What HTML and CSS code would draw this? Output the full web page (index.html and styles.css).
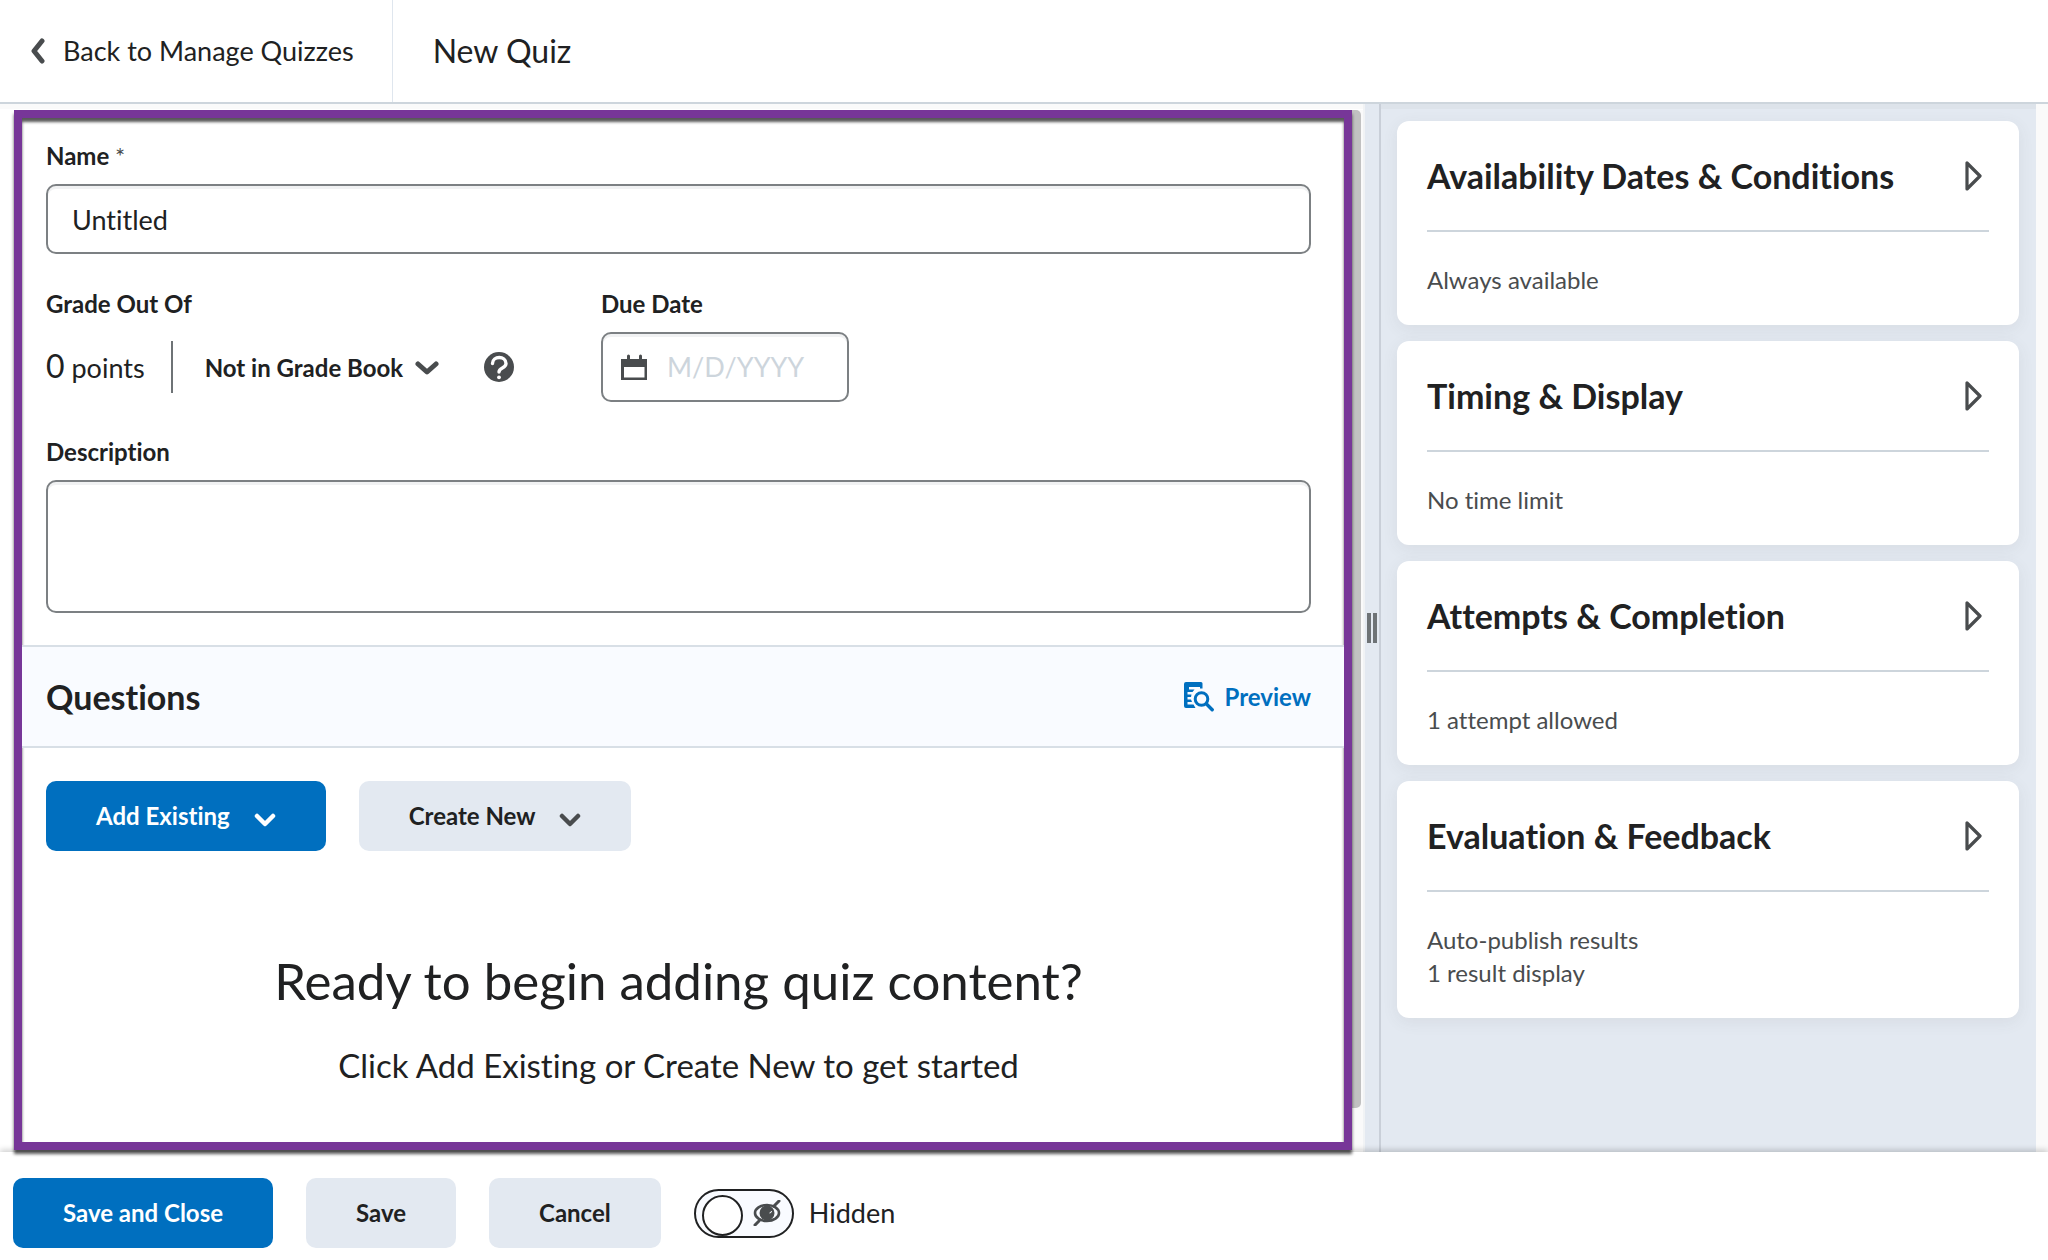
FILE: index.html
```
<!DOCTYPE html>
<html lang="en">
<head>
  <meta charset="utf-8">
  <title>New Quiz</title>
  <link rel="stylesheet" href="styles.css">
</head>
<body>
  <header class="top-bar">
    <a href="#" class="back-link">
      <svg width="15" height="26" viewBox="0 0 15 26"><path d="M12 3L4 13l8 10" fill="none" stroke="#494c4e" stroke-width="5" stroke-linecap="round" stroke-linejoin="round"/></svg>
      Back to Manage Quizzes
    </a>
    <h1 class="page-title">New Quiz</h1>
  </header>

  <main class="content">
    <div class="primary">
      <form class="editor" id="quizForm">
        <div class="fields">
          <div class="field">
            <label for="quizName">Name <span class="required">*</span></label>
            <input type="text" id="quizName" class="text-box" value="Untitled">
          </div>

          <div class="field-row">
            <div class="field grade">
              <span class="label">Grade Out Of</span>
              <div class="grade-row">
                <span class="points"><span class="points-value">0</span> points</span>
                <button type="button" class="grade-book">
                  Not in Grade Book
                  <svg width="24" height="14" viewBox="0 0 24 14"><path d="M3 3l9 8 9-8" fill="none" stroke="#494c4e" stroke-width="5" stroke-linecap="round" stroke-linejoin="round"/></svg>
                </button>
                <button type="button" class="help" aria-label="Help">
                  <svg width="30" height="30" viewBox="0 0 30 30">
                    <circle cx="15" cy="15" r="15" fill="#494c4e"/>
                    <path d="M8.500 11.500C8.500 3.500 22 3.500 22 11.500c0 5-7 4-7 8.500" fill="none" stroke="#fff" stroke-width="3.400" stroke-linecap="round"/>
                    <circle cx="15" cy="25.300" r="1.900" fill="#fff"/>
                  </svg>
                </button>
              </div>
            </div>
            <div class="field due">
              <label for="dueDate">Due Date</label>
              <div class="date-box">
                <svg width="26" height="26" viewBox="0 0 26 26"><path d="M0 5h6V2a1.500 1.500 0 013 0v3h9V2a1.500 1.500 0 013 0v3h5v21H0zM3 13v10.500h20.500V13z" fill="#494c4e" fill-rule="evenodd"/></svg>
                <input type="text" id="dueDate" placeholder="M/D/YYYY">
              </div>
            </div>
          </div>

          <div class="field">
            <label for="description">Description</label>
            <textarea id="description" class="text-box"></textarea>
          </div>
        </div>

        <div class="questions-bar">
          <h2>Questions</h2>
          <a href="#" class="preview">
            <svg width="30" height="30" viewBox="0 0 30 30" fill="none">
              <path d="M2 0h15a1.500 1.500 0 011.500 1.500V6.500H16V5H5v2.500h5.500L8.500 10H3.500v2.500H7.500L7 15H3.500v2.500H7L8 20H3.500v2.500H9.500l2 3.500H2a2 2 0 01-2-2V2a2 2 0 012-2z" fill="#006fbf"/>
              <circle cx="17.500" cy="17" r="6.300" stroke="#006fbf" stroke-width="3"/>
              <path d="M22.500 22l5.700 5.700" stroke="#006fbf" stroke-width="3.400" stroke-linecap="round"/>
            </svg>
            Preview
          </a>
        </div>

        <div class="questions">
          <div class="actions">
            <button type="button" class="btn btn-primary btn-menu">
              Add Existing
              <svg width="22" height="14" viewBox="0 0 22 14"><path d="M3 3l8 8 8-8" fill="none" stroke="#fff" stroke-width="4.500" stroke-linecap="round" stroke-linejoin="round"/></svg>
            </button>
            <button type="button" class="btn btn-menu">
              Create New
              <svg width="22" height="14" viewBox="0 0 22 14"><path d="M3 3l8 8 8-8" fill="none" stroke="#494c4e" stroke-width="4.500" stroke-linecap="round" stroke-linejoin="round"/></svg>
            </button>
          </div>
          <div class="empty">
            <h3>Ready to begin adding quiz content?</h3>
            <p>Click Add Existing or Create New to get started</p>
          </div>
        </div>
      </form>
      <div class="scroll-track"><div class="scroll-thumb"></div></div>
    </div>

    <div class="divider"><span></span><span></span></div>

    <aside class="settings">
      <section class="card">
        <h2><button type="button">Availability Dates &amp; Conditions
          <svg width="17" height="30" viewBox="0 0 17 30"><path d="M2 2v26l13-13z" fill="none" stroke="#494c4e" stroke-width="3.200" stroke-linejoin="round"/></svg></button></h2>
        <p>Always available</p>
      </section>
      <section class="card">
        <h2><button type="button">Timing &amp; Display
          <svg width="17" height="30" viewBox="0 0 17 30"><path d="M2 2v26l13-13z" fill="none" stroke="#494c4e" stroke-width="3.200" stroke-linejoin="round"/></svg></button></h2>
        <p>No time limit</p>
      </section>
      <section class="card">
        <h2><button type="button">Attempts &amp; Completion
          <svg width="17" height="30" viewBox="0 0 17 30"><path d="M2 2v26l13-13z" fill="none" stroke="#494c4e" stroke-width="3.200" stroke-linejoin="round"/></svg></button></h2>
        <p>1 attempt allowed</p>
      </section>
      <section class="card">
        <h2><button type="button">Evaluation &amp; Feedback
          <svg width="17" height="30" viewBox="0 0 17 30"><path d="M2 2v26l13-13z" fill="none" stroke="#494c4e" stroke-width="3.200" stroke-linejoin="round"/></svg></button></h2>
        <p>Auto-publish results</p>
        <p>1 result display</p>
      </section>
    </aside>
  </main>

  <footer class="bottom-bar">
    <button type="submit" form="quizForm" class="btn btn-primary">Save and Close</button>
    <button type="button" class="btn">Save</button>
    <button type="button" class="btn">Cancel</button>
    <label class="visibility">
      <span class="switch">
        <input type="checkbox" role="switch">
        <svg width="28" height="26" viewBox="0 0 28 26">
          <ellipse cx="14" cy="13" rx="12" ry="8" fill="none" stroke="#494c4e" stroke-width="2.600"/>
          <circle cx="14" cy="13" r="7.500" fill="#494c4e"/>
          <path d="M2 25l4-4M21 6l5-5" stroke="#494c4e" stroke-width="3" stroke-linecap="round"/>
          <path d="M16.500 13q2 0 2-2" stroke="#f9fbff" fill="none"/>
        </svg>
      </span>
      Hidden
    </label>
  </footer>
</body>
</html>
```
FILE: styles.css
```
* {
  box-sizing: border-box;
}

body {
  margin: 0;
  min-height: 100vh;
  display: flex;
  flex-direction: column;
  font-family: Lato, "Liberation Sans", sans-serif;
  font-size: 27px;
  line-height: 34px;
  font-variant-ligatures: none;
  color: #202122;
  background: #fff;
}

h1, h2, h3, p {
  margin: 0;
}

svg {
  flex: none;
}

button, input, textarea {
  font: inherit;
  font-variant-ligatures: none;
  color: inherit;
}

button {
  border: 0;
  padding: 0;
  background: none;
  cursor: pointer;
}

/* Header */
.top-bar {
  display: flex;
  height: 104px;
  border-bottom: 2px solid #cdd5dc;
}

.back-link {
  display: flex;
  align-items: center;
  gap: 18px;
  padding: 0 38px 0 30px;
  border-right: 1px solid #dfe6ee;
  color: #202122;
  text-decoration: none;
}

.page-title {
  align-self: center;
  padding-left: 40px;
  font-size: 32px;
  line-height: 40px;
  font-weight: 400;
}

/* Main area */
.content {
  flex: 1;
  display: grid;
  grid-template-columns: 47fr 18px 23fr;
}

.primary {
  display: flex;
  padding: 6px 0 2px 14px;
  background: linear-gradient(#fafafa 5px, #fff 5px);
}

.editor {
  flex: 1;
  position: relative;
  z-index: 1;
  border: 8px solid #773698;
  background: #fff;
  box-shadow: 0 4px 3px rgba(0, 0, 0, 0.65), inset 0 4px 3px rgba(0, 0, 0, 0.65);
}

.scroll-track {
  width: 11px;
  background: #fafafa;
}

.scroll-thumb {
  width: 9px;
  height: 96%;
  background: #c1c1c1;
  border-radius: 0 5px 5px 0;
}

.fields {
  display: flex;
  flex-direction: column;
  gap: 36px;
  padding: 24px 33px 32px 24px;
}

.field {
  display: flex;
  flex-direction: column;
  gap: 14px;
}

.field > label, .label {
  font-size: 24px;
  line-height: 28px;
  font-weight: 700;
}

.required {
  font-weight: 400;
  color: #494c4e;
}

.text-box, .date-box {
  width: 100%;
  height: 70px;
  padding: 0 24px;
  border: 2px solid #7c8083;
  border-radius: 10px;
  background: #fff;
  box-shadow: inset 0 3px 0 #f1f2f3;
}

textarea.text-box {
  height: 133px;
  padding: 16px 24px;
  resize: none;
}

.field-row {
  display: flex;
}

.grade {
  width: 555px;
}

.grade-row {
  display: flex;
  align-items: center;
  height: 70px;
}

.points {
  padding-right: 26px;
  line-height: 50px;
  border-right: 2px solid #6e7376;
}

.points-value {
  font-size: 32px;
}

.grade-book {
  display: flex;
  align-items: center;
  gap: 12px;
  margin-left: 32px;
  padding-top: 2px;
  font-size: 24px;
  font-weight: 700;
}

.help {
  display: flex;
  margin-left: 45px;
}

.date-box {
  display: flex;
  align-items: center;
  gap: 20px;
  width: 248px;
  padding: 0 18px;
}

.date-box input {
  width: 100%;
  min-width: 0;
  padding: 0;
  border: 0;
  outline: 0;
  background: none;
}

.date-box input::placeholder {
  color: #cdd5dc;
  opacity: 1;
}

/* Questions */
.questions-bar {
  display: flex;
  align-items: center;
  justify-content: space-between;
  height: 103px;
  padding: 0 33px 0 24px;
  border-top: 2px solid #d8dfe6;
  border-bottom: 2px solid #d8dfe6;
  background: #f9fbff;
}

.questions-bar h2, .card h2 {
  font-size: 34px;
  line-height: 40px;
  font-weight: 700;
}

.preview {
  display: flex;
  align-items: center;
  gap: 11px;
  font-size: 24px;
  font-weight: 700;
  color: #006fbf;
  text-decoration: none;
}

.questions {
  padding: 33px 33px 54px 24px;
}

.actions {
  display: flex;
  gap: 33px;
}

.btn {
  height: 70px;
  padding: 0 50px;
  border-radius: 10px;
  font-size: 24px;
  font-weight: 700;
  background: #e3e9f1;
}

.btn-primary {
  color: #fff;
  background: #006fbf;
}

.btn-menu {
  display: flex;
  align-items: center;
  gap: 24px;
}

.btn-menu svg {
  margin-top: 8px;
}

.empty {
  margin-top: 100px;
  text-align: center;
}

.empty h3 {
  font-size: 51px;
  line-height: 60px;
  font-weight: 400;
}

.empty p {
  margin-top: 34px;
  font-size: 33px;
  line-height: 40px;
}

/* Drag handle between the panes */
.divider {
  display: flex;
  align-items: center;
  justify-content: center;
  gap: 2px;
  border-left: 2px solid #f1f3f5;
  border-right: 2px solid #c9cfd8;
  background: #e3e9f1;
}

.divider span {
  width: 4px;
  height: 30px;
  background: #6e7376;
}

/* Settings cards */
.settings {
  display: flex;
  flex-direction: column;
  gap: 16px;
  padding: 17px 17px 17px 16px;
  border-right: 12px solid #fafafa;
  background: linear-gradient(#dde3ea 5px, #e3e9f1 5px);
}

.card {
  padding: 0 30px 29px;
  border-radius: 12px;
  background: #fff;
  box-shadow: 0 4px 16px rgba(73, 76, 78, 0.08);
}

.card h2 {
  margin-bottom: 31px;
  border-bottom: 2px solid #cdd5dc;
}

.card h2 button {
  display: flex;
  align-items: center;
  justify-content: space-between;
  width: 100%;
  height: 109px;
  padding-right: 7px;
  text-align: left;
}

.card p {
  font-size: 24px;
  line-height: 33px;
  color: #494c4e;
}

/* Footer */
.bottom-bar {
  display: flex;
  align-items: center;
  gap: 33px;
  height: 108px;
  padding: 14px 13px 0;
  background: #fff;
  box-shadow: 0 -2px 6px rgba(0, 0, 0, 0.2);
}

.visibility {
  display: flex;
  align-items: center;
  gap: 15px;
}

.switch {
  position: relative;
  display: flex;
}

.switch input {
  appearance: none;
  width: 100px;
  height: 49px;
  margin: 0;
  border: 2px solid #202122;
  border-radius: 25px;
  background: #f9fbff;
}

.switch input::before {
  content: "";
  display: block;
  width: 37px;
  height: 37px;
  margin: 4px 6px;
  border: 2px solid #202122;
  border-radius: 50%;
  background: #fff;
}

.switch input:checked::before {
  margin-left: 53px;
}

.switch svg {
  position: absolute;
  top: 11px;
  right: 13px;
  pointer-events: none;
}
```
